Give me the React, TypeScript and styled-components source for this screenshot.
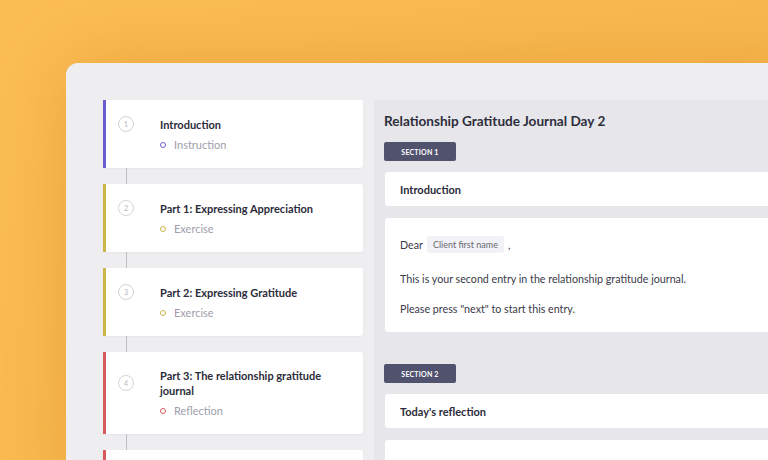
import React from 'react'
import styled, { createGlobalStyle } from 'styled-components'

const Global = createGlobalStyle`
  html, body {
    margin: 0;
    padding: 0;
    overflow: hidden;
  }
  body {
    font-family: Lato, "Open Sans", sans-serif;
  }
`

type Step = {
  num: number
  title: string
  kind: string
  color: string
}

const steps: Step[] = [
  { num: 1, title: 'Introduction', kind: 'Instruction', color: '#6a5fd0' },
  { num: 2, title: 'Part 1: Expressing Appreciation', kind: 'Exercise', color: '#cbb64c' },
  { num: 3, title: 'Part 2: Expressing Gratitude', kind: 'Exercise', color: '#cbb64c' },
  { num: 4, title: 'Part 3: The relationship gratitude journal', kind: 'Reflection', color: '#d95a5c' },
  { num: 5, title: '', kind: '', color: '#d95a5c' },
]

const App = () => {
  return (
    <Stage>
      <Global />
      <Window>
        <Steps>
          {steps.map((s, i) => (
            <React.Fragment key={s.num}>
              {i > 0 && <Connector />}
              <StepCard $color={s.color}>
                {s.title && (
                  <>
                    <Head>
                      <Num>{s.num}</Num>
                      <StepTitle>{s.title}</StepTitle>
                    </Head>
                    <Kind>
                      <Dot $color={s.color} />
                      {s.kind}
                    </Kind>
                  </>
                )}
              </StepCard>
            </React.Fragment>
          ))}
        </Steps>
        <Panel>
          <PanelTitle>Relationship Gratitude Journal Day 2</PanelTitle>
          <Badge>Section 1</Badge>
          <Block>
            <BlockTitle>Introduction</BlockTitle>
          </Block>
          <Body>
            <Para $after={4}>
              Dear <Chip>Client first name</Chip> ,
            </Para>
            <Para>This is your second entry in the relationship gratitude journal.</Para>
            <Para>Please press "next" to start this entry.</Para>
          </Body>
          <Badge $top={32}>Section 2</Badge>
          <Block>
            <BlockTitle>Today's reflection</BlockTitle>
          </Block>
          <Body>
            <Para>What is today's date?</Para>
          </Body>
        </Panel>
      </Window>
    </Stage>
  )
}

export default App

const Stage = styled.div`
  width: 768px;
  height: 460px;
  overflow: hidden;
  box-sizing: border-box;
  padding: 63px 0 0 66px;
  background: linear-gradient(135deg, #fbbe55 0%, #f8b950 60%, #f6b44e 100%);
`
const Window = styled.div`
  width: 760px;
  height: 440px;
  box-sizing: border-box;
  padding: 37px 0 0 37px;
  display: flex;
  gap: 11px;
  border-radius: 12px 0 0 0;
  background: #eeeef1;
  box-shadow: 0 0 70px rgba(205, 125, 20, 0.35);
`
const Steps = styled.div`
  width: 260px;
  flex-shrink: 0;
  display: flex;
  flex-direction: column;
`
const Connector = styled.div`
  width: 1px;
  height: 16px;
  flex-shrink: 0;
  margin-left: 23px;
  background: #bdbdc6;
`
const StepCard = styled.div<{ $color: string }>`
  box-sizing: border-box;
  min-height: 68px;
  flex-shrink: 0;
  padding: 16px 12px 15px 0;
  background: #fff;
  border-left: 3px solid ${p => p.$color};
  border-radius: 0 3px 3px 0;
  box-shadow: 0 1px 2px rgba(40, 40, 60, 0.04);
  display: flex;
  flex-direction: column;
  gap: 5px;
`
const Head = styled.div`
  display: flex;
  align-items: center;
  gap: 26px;
  padding-left: 12px;
`
const Num = styled.div`
  box-sizing: border-box;
  width: 16px;
  height: 16px;
  flex-shrink: 0;
  border: 1px solid #d3d3da;
  border-radius: 50%;
  color: #b4b4be;
  font-size: 7px;
  display: flex;
  align-items: center;
  justify-content: center;
`
const StepTitle = styled.div`
  font-size: 11px;
  font-weight: 700;
  line-height: 15px;
  color: #2c2c3a;
`
const Kind = styled.div`
  display: flex;
  align-items: center;
  gap: 8px;
  padding-left: 54px;
  font-size: 11px;
  line-height: 16px;
  color: #9e9eac;
`
const Dot = styled.span`
  width: 4px;
  height: 4px;
  border: 1.5px solid ${(p: { $color: string }) => p.$color};
  border-radius: 50%;
`
const Panel = styled.div`
  flex: 1;
  box-sizing: border-box;
  padding: 12px 0 0 10px;
  background: #e6e6eb;
  border-radius: 3px 0 0 0;
  display: flex;
  flex-direction: column;
  align-items: flex-start;
`
const PanelTitle = styled.div`
  font-size: 13.6px;
  font-weight: 700;
  line-height: 18px;
  color: #2e2e3c;
  margin-bottom: 12px;
`
const Badge = styled.div<{ $top?: number }>`
  margin-top: ${p => p.$top ?? 0}px;
  width: 72px;
  height: 19px;
  flex-shrink: 0;
  border-radius: 2px;
  background: #50526e;
  color: #fff;
  font-size: 7px;
  font-weight: 700;
  letter-spacing: 0.2px;
  text-transform: uppercase;
  display: flex;
  align-items: center;
  justify-content: center;
  margin-bottom: 11px;
`
const Block = styled.div`
  align-self: stretch;
  flex-shrink: 0;
  margin-left: 1px;
  height: 34px;
  box-sizing: border-box;
  padding-left: 15px;
  background: #fff;
  border-radius: 3px 0 0 3px;
  display: flex;
  align-items: center;
`
const BlockTitle = styled.div`
  font-size: 11px;
  font-weight: 700;
  color: #2c2c3a;
`
const Body = styled.div`
  align-self: stretch;
  flex-shrink: 0;
  margin: 12px 0 0 1px;
  box-sizing: border-box;
  padding: 18px 0 15px 15px;
  background: #fff;
  border-radius: 3px 0 0 3px;
  display: flex;
  flex-direction: column;
  gap: 14px;
`
const Para = styled.div<{ $after?: number }>`
  font-size: 10.7px;
  line-height: 16px;
  color: #3a3a48;
  display: flex;
  align-items: center;
  gap: 4px;
  margin-bottom: ${p => p.$after ?? 0}px;
`
const Chip = styled.span`
  display: inline-flex;
  align-items: center;
  height: 17px;
  padding: 0 6px;
  border-radius: 3px;
  background: #f1f1f6;
  color: #6a6a72;
  font-size: 9px;
`
